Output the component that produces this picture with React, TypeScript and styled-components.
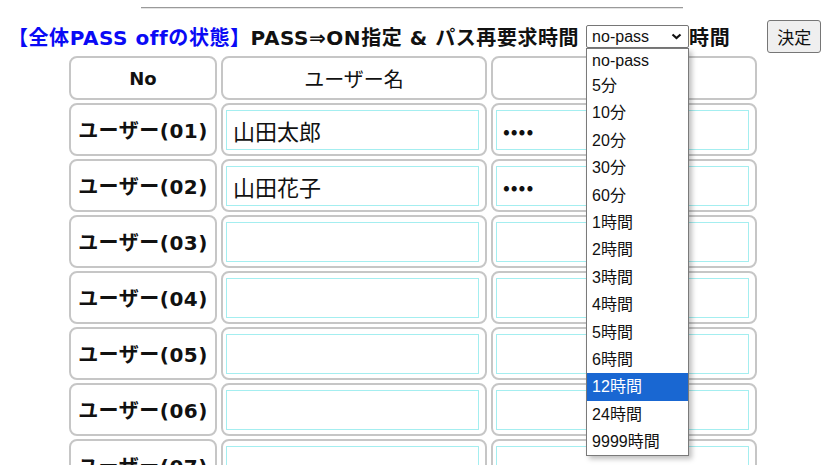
import React from "react";
import styled, { createGlobalStyle } from "styled-components";

const GlobalStyle = createGlobalStyle`
  html, body {
    margin: 0;
    padding: 0;
    overflow: hidden;
    background: #fff;
  }
  * { box-sizing: border-box; }
`;

const jp = `"DejaVu Sans", "Noto Sans CJK JP", sans-serif`;
const ui = `"Liberation Sans", "Noto Sans CJK JP", sans-serif`;

const users = [
  { name: "山田太郎", pass: "1234" },
  { name: "山田花子", pass: "1234" },
  { name: "", pass: "" },
  { name: "", pass: "" },
  { name: "", pass: "" },
  { name: "", pass: "" },
  { name: "", pass: "" },
  { name: "", pass: "" },
];

const options = [
  "no-pass", "5分", "10分", "20分", "30分", "60分", "1時間", "2時間", "3時間",
  "4時間", "5時間", "6時間", "12時間", "24時間", "9999時間",
];

const App: React.FC = () => {
  return (
    <>
      <GlobalStyle />
      <Page>
        <Rule />
        <TitleRow>
          <Title>
            <Status>【全体PASS offの状態】</Status>PASS⇒ON指定 &amp; パス再要求時間
          </Title>
          <SelectWrap>
            <SelectBox>
              <span>no-pass</span>
              <svg width="11" height="7" viewBox="0 0 11 7">
                <polyline points="1.5,1.5 5.5,5 9.5,1.5" fill="none" stroke="#111" strokeWidth="2.2" />
              </svg>
            </SelectBox>
            <Popup>
              {options.map((o) => (
                <Option key={o} $short={o === "no-pass"} $active={o === "12時間"}>{o}</Option>
              ))}
            </Popup>
          </SelectWrap>
          <Title>時間</Title>
          <Submit>決定</Submit>
        </TitleRow>
        <Table>
          <thead>
            <tr>
              <HeadCell $w={148} $bold>No</HeadCell>
              <HeadCell $w={266}>ユーザー名</HeadCell>
              <HeadCell $w={266}></HeadCell>
            </tr>
          </thead>
          <tbody>
            {users.map((u, i) => (
              <tr key={i}>
                <LabelCell>ユーザー({String(i + 1).padStart(2, "0")})</LabelCell>
                <Cell>
                  <Field type="text" defaultValue={u.name} />
                </Cell>
                <Cell>
                  <Field type="password" defaultValue={u.pass} />
                </Cell>
              </tr>
            ))}
          </tbody>
        </Table>
      </Page>
    </>
  );
};

export default App;

const Page = styled.div`
  padding: 0 8px;
  width: 834px;
`;

const Rule = styled.div`
  margin: 7px 0 0 133px;
  width: 542px;
  height: 0;
  border-top: 1px solid #9a9a9a;
  border-bottom: 1px solid #e4e4e4;
`;

const TitleRow = styled.div`
  display: flex;
  align-items: center;
  height: 33px;
  margin-top: 11px;
`;

const Title = styled.div`
  font-family: ${jp};
  font-weight: bold;
  font-size: 20px;
  letter-spacing: 0.55px;
  color: #111;
  white-space: nowrap;
`;

const Status = styled.span`
  color: #0a0af5;
`;

const SelectWrap = styled.div`
  position: relative;
  margin: 0 0 0 7px;
`;

const SelectBox = styled.div`
  width: 103px;
  height: 23px;
  border: 1px solid #767676;
  border-radius: 2px;
  background: #fff;
  display: flex;
  align-items: center;
  justify-content: space-between;
  padding: 0 6px 0 5px;
  font-family: ${ui};
  font-size: 16px;
  color: #111;
`;

const Popup = styled.div`
  position: absolute;
  top: 100%;
  left: 0;
  width: 103px;
  background: #fff;
  border: 1px solid #7a7a7a;
  box-shadow: 3px 3px 5px rgba(0, 0, 0, 0.25);
  z-index: 10;
`;

const Option = styled.div<{ $short: boolean; $active: boolean }>`
  height: ${(p) => (p.$short ? "23px" : "27.4px")};
  line-height: ${(p) => (p.$short ? "23px" : "27.4px")};
  padding-left: 5px;
  font-family: ${ui};
  font-size: 16px;
  color: ${(p) => (p.$active ? "#fff" : "#111")};
  background: ${(p) => (p.$active ? "#1967d2" : "transparent")};
  white-space: nowrap;
`;

const Submit = styled.button`
  margin-left: 37px;
  width: 54px;
  height: 33px;
  padding: 0;
  border: 1px solid #767676;
  border-radius: 3px;
  background: #efefef;
  font-family: "Noto Sans CJK JP", sans-serif;
  font-size: 17px;
  color: #111;
`;

const Table = styled.table`
  margin-left: 57px;
  border-collapse: separate;
  border-spacing: 4px 3.5px;
  table-layout: fixed;
`;

const baseCell = `
  border: 2px solid #c6c6c6;
  border-radius: 8px;
  padding: 0;
  vertical-align: middle;
`;

const HeadCell = styled.th<{ $w: number; $bold?: boolean }>`
  ${baseCell}
  width: ${(p) => p.$w}px;
  height: 44px;
  text-align: center;
  font-family: ${jp};
  font-size: ${(p) => (p.$bold ? "18px" : "20px")};
  font-weight: ${(p) => (p.$bold ? "bold" : "normal")};
  color: #111;
`;

const LabelCell = styled.td`
  ${baseCell}
  height: 53px;
  text-align: center;
  font-family: ${jp};
  font-size: 20px;
  font-weight: bold;
  color: #111;
  white-space: nowrap;
  letter-spacing: 0.5px;
`;

const Cell = styled.td`
  ${baseCell}
  height: 53px;
  padding: 0 6px 0 3px;
`;

const Field = styled.input`
  display: block;
  width: 100%;
  height: 40px;
  border: 1px solid #a4eef0;
  padding: 0 6px;
  font-family: "Noto Sans CJK JP", sans-serif;
  font-size: 22px;
  color: #111;
  outline: none;
  &[type="password"] {
    font-size: 18px;
    font-weight: bold;
    letter-spacing: 1px;
  }
`;
